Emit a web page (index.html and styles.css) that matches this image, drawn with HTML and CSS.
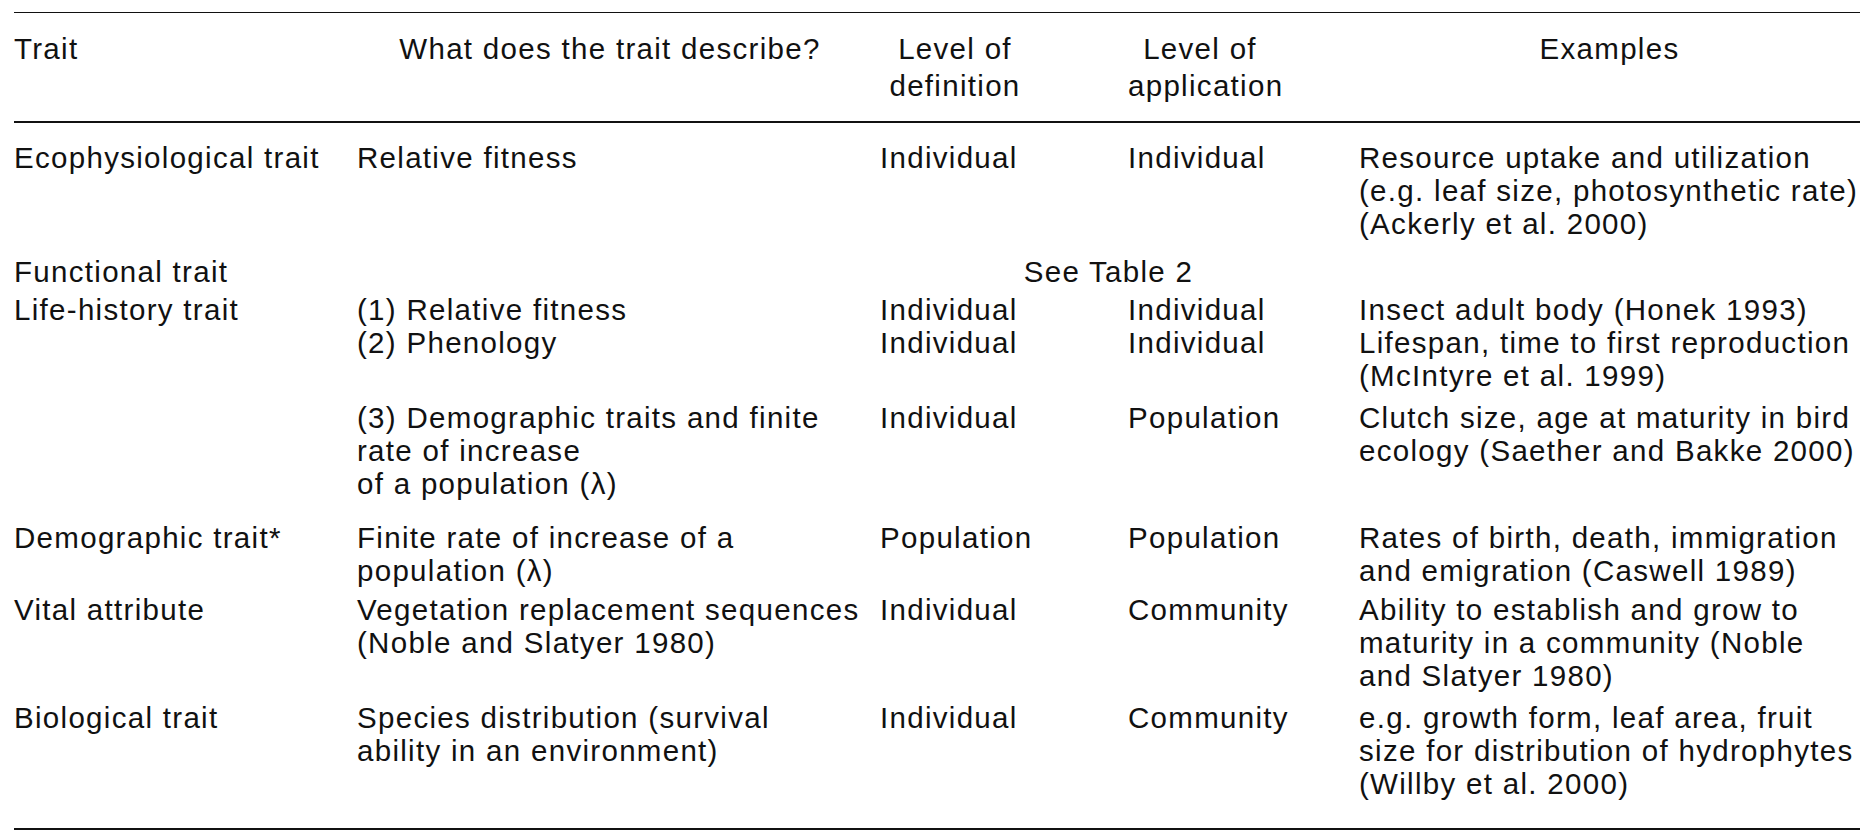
FILE: index.html
```html
<!DOCTYPE html>
<html lang="en">
<head>
<meta charset="utf-8">
<title>Trait definitions</title>
<link rel="stylesheet" href="styles.css">
</head>
<body>
<table class="traits">
  <colgroup>
    <col class="c1"><col class="c2"><col class="c3"><col class="c4"><col class="c5">
  </colgroup>
  <thead>
    <tr>
      <th class="h1">Trait</th>
      <th class="h2">What does the trait describe?</th>
      <th class="h3">Level of<br>definition</th>
      <th class="h4">Level of<br>application</th>
      <th class="h5">Examples</th>
    </tr>
  </thead>
  <tbody>
    <tr class="r-eco">
      <td>Ecophysiological trait</td>
      <td>Relative fitness</td>
      <td>Individual</td>
      <td>Individual</td>
      <td>Resource uptake and utilization<br>(e.g. leaf size, photosynthetic rate)<br>(Ackerly et al. 2000)</td>
    </tr>
    <tr class="r-fun">
      <td>Functional trait</td>
      <td colspan="4" class="span">See Table 2</td>
    </tr>
    <tr class="r-l1">
      <td>Life-history trait</td>
      <td>(1) Relative fitness</td>
      <td>Individual</td>
      <td>Individual</td>
      <td>Insect adult body (Honek 1993)</td>
    </tr>
    <tr class="r-l2">
      <td></td>
      <td>(2) Phenology</td>
      <td>Individual</td>
      <td>Individual</td>
      <td>Lifespan, time to first reproduction<br>(McIntyre et al. 1999)</td>
    </tr>
    <tr class="r-l3">
      <td></td>
      <td>(3) Demographic traits and finite<br>rate of increase<br>of a population (λ)</td>
      <td>Individual</td>
      <td>Population</td>
      <td>Clutch size, age at maturity in bird<br>ecology (Saether and Bakke 2000)</td>
    </tr>
    <tr class="r-dem">
      <td>Demographic trait*</td>
      <td>Finite rate of increase of a<br>population (λ)</td>
      <td>Population</td>
      <td>Population</td>
      <td>Rates of birth, death, immigration<br>and emigration (Caswell 1989)</td>
    </tr>
    <tr class="r-vit">
      <td>Vital attribute</td>
      <td>Vegetation replacement sequences<br>(Noble and Slatyer 1980)</td>
      <td>Individual</td>
      <td>Community</td>
      <td>Ability to establish and grow to<br>maturity in a community (Noble<br>and Slatyer 1980)</td>
    </tr>
    <tr class="r-bio">
      <td>Biological trait</td>
      <td>Species distribution (survival<br>ability in an environment)</td>
      <td>Individual</td>
      <td>Community</td>
      <td>e.g. growth form, leaf area, fruit<br>size for distribution of hydrophytes<br>(Willby et al. 2000)</td>
    </tr>
  </tbody>
</table>
</body>
</html>
```
FILE: styles.css
```css
html, body {
  margin: 0;
  padding: 0;
  background: #ffffff;
}

body {
  font-family: "Liberation Sans", Arial, sans-serif;
  font-size: 29.5px;
  letter-spacing: 1.3px;
  color: #111111;
  overflow: hidden;
}

.traits {
  margin: 12px 0 0 14px;
  width: 1846px;
  table-layout: fixed;
  border-collapse: separate;
  border-spacing: 0;
  border-top: 1px solid #111111;
}

.c1 { width: 343px; }
.c2 { width: 523px; }
.c3 { width: 248px; }
.c4 { width: 231px; }
.c5 { width: 501px; }

.traits th,
.traits td {
  padding: 0;
  vertical-align: top;
  white-space: nowrap;
  text-align: left;
  font-weight: normal;
}

.traits th {
  line-height: 37px;
  padding-top: 17px;
  padding-bottom: 17px;
  border-bottom: 2px solid #111111;
}

.traits th.h2 { text-align: center; padding-right: 17px; }
.traits th.h3 { text-align: center; padding-right: 98px; }
.traits th.h4 { text-align: center; padding-right: 87px; }
.traits th.h5 { text-align: center; }

.traits td {
  line-height: 33px;
}

.traits td.span {
  text-align: center;
}

.r-eco td { padding-top: 18px; }
.r-fun td { padding-top: 15px; }
.r-l1 td { padding-top: 5px; }
.r-l2 td { padding-top: 0; }
.r-l3 td { padding-top: 9px; }
.r-dem td { padding-top: 21px; }
.r-vit td { padding-top: 6px; }
.r-bio td {
  padding-top: 9px;
  padding-bottom: 28px;
  border-bottom: 2px solid #111111;
}
```
